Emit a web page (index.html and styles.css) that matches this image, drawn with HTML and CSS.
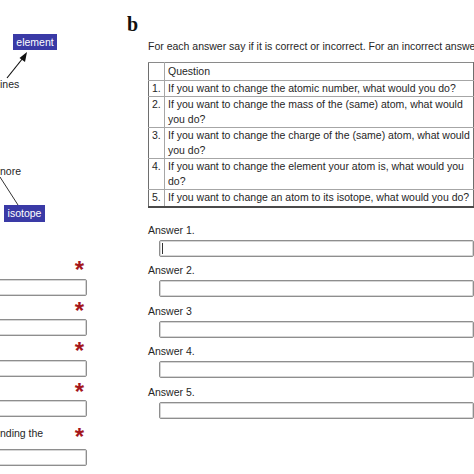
FILE: index.html
```html
<!DOCTYPE html>
<html>
<head>
<meta charset="utf-8">
<link rel="stylesheet" href="styles.css">
</head>
<body>
<div class="page">
  <div class="left">
    <div class="diagram">
      <div class="node node-element">element</div>
      <div class="word word-lines">ines</div>
      <div class="word word-more">nore</div>
      <div class="node node-isotope">isotope</div>
      <svg class="links" width="127" height="255" viewBox="0 0 127 255">
        <line x1="7" y1="78" x2="23" y2="58" stroke="#111" stroke-width="1.2"/>
        <polygon points="27,52 19.5,58 25,62" fill="#111"/>
        <line x1="0" y1="177" x2="18" y2="205" stroke="#333" stroke-width="1"/>
      </svg>
    </div>
    <div class="lfield">
      <div class="lrow"><span class="ltext"></span><span class="star">*</span></div>
      <input class="linput" type="text">
    </div>
    <div class="lfield">
      <div class="lrow"><span class="ltext"></span><span class="star">*</span></div>
      <input class="linput" type="text">
    </div>
    <div class="lfield">
      <div class="lrow"><span class="ltext"></span><span class="star">*</span></div>
      <input class="linput" type="text">
    </div>
    <div class="lfield">
      <div class="lrow"><span class="ltext"></span><span class="star">*</span></div>
      <input class="linput" type="text">
    </div>
    <div class="lfield">
      <div class="lrow lrow-last"><span class="ltext">nding the</span><span class="star">*</span></div>
      <input class="linput" type="text">
    </div>
  </div>
  <div class="right">
    <div class="panel-letter">b</div>
    <div class="content">
      <p class="intro">For each answer say if it is correct or incorrect. For an incorrect answer</p>
      <table class="qtable">
        <tr class="head"><td class="num"></td><td class="q">Question</td></tr>
        <tr><td class="num">1.</td><td class="q">If you want to change the atomic number, what would you do?</td></tr>
        <tr><td class="num">2.</td><td class="q">If you want to change the mass of the (same) atom, what would you do?</td></tr>
        <tr><td class="num">3.</td><td class="q">If you want to change the charge of the (same) atom, what would you do?</td></tr>
        <tr><td class="num">4.</td><td class="q">If you want to change the element your atom is, what would you do?</td></tr>
        <tr class="last"><td class="num">5.</td><td class="q">If you want to change an atom to its isotope, what would you do?</td></tr>
      </table>
      <div class="answers">
        <div class="answer">
          <div class="alabel">Answer 1.</div>
          <div class="abox"><input class="ainput" type="text"><span class="caret"></span></div>
        </div>
        <div class="answer">
          <div class="alabel">Answer 2.</div>
          <div class="abox"><input class="ainput" type="text"></div>
        </div>
        <div class="answer">
          <div class="alabel">Answer 3</div>
          <div class="abox"><input class="ainput" type="text"></div>
        </div>
        <div class="answer">
          <div class="alabel">Answer 4.</div>
          <div class="abox"><input class="ainput" type="text"></div>
        </div>
        <div class="answer">
          <div class="alabel">Answer 5.</div>
          <div class="abox"><input class="ainput" type="text"></div>
        </div>
      </div>
    </div>
  </div>
</div>
</body>
</html>
```

FILE: styles.css
```css
html, body {
  margin: 0;
  padding: 0;
  background: #ffffff;
  overflow: hidden;
}
body {
  width: 474px;
  height: 474px;
  font-family: "Liberation Sans", Arial, sans-serif;
  font-size: 10.5px;
  color: #262626;
}
.page {
  display: flex;
  width: 474px;
  height: 474px;
  overflow: hidden;
}
.left {
  width: 127px;
  flex: 0 0 127px;
  overflow: hidden;
}
.diagram {
  position: relative;
  height: 255px;
}
.links {
  position: absolute;
  left: 0;
  top: 0;
}
.node {
  position: absolute;
  background: #3a3aa6;
  color: #ffffff;
  line-height: 16px;
  text-align: center;
  z-index: 1;
}
.node-element {
  left: 13px;
  top: 34px;
  width: 44px;
  height: 16px;
}
.node-isotope {
  left: 4px;
  top: 205px;
  width: 41px;
  height: 17px;
  line-height: 17px;
}
.word {
  position: absolute;
  left: 0;
  line-height: 14px;
}
.word-lines { top: 77px; }
.word-more { top: 164px; }

.lfield {
  display: flex;
  flex-direction: column;
}
.lrow {
  display: flex;
  justify-content: space-between;
  align-items: flex-start;
  width: 86px;
  height: 23.5px;
}
.lrow-last {
  height: 32px;
}
.ltext {
  line-height: 14px;
  padding-top: 9px;
}
.star {
  font-family: "Liberation Sans", Arial, sans-serif;
  font-weight: bold;
  font-size: 24px;
  line-height: 24px;
  color: #a4161c;
  padding-top: 3px;
  margin-right: 2px;
}
.lrow-last .star { padding-top: 8px; }
.linput {
  display: block;
  box-sizing: border-box;
  margin: 0 0 0 -10px;
  width: 97px;
  height: 17px;
  border: 1px solid #8e8e8e;
  border-radius: 2px;
  box-shadow: inset 0 0 0 1px #d6d6d6;
  background: #ffffff;
  padding: 0;
  outline: none;
}

.right {
  flex: 1 1 auto;
  min-width: 0;
}
.panel-letter {
  font-family: "Liberation Serif", "Times New Roman", serif;
  font-weight: bold;
  font-size: 20px;
  line-height: 20px;
  color: #111111;
  margin-top: 14px;
  height: 20px;
}
.content {
  padding-left: 21px;
}
.intro {
  margin: 5px 0 0 0;
  line-height: 14px;
  white-space: nowrap;
}
.qtable {
  margin-top: 9px;
  border-collapse: collapse;
  width: 326px;
  line-height: 14.5px;
}
.qtable td {
  border: 1px solid #a6a6a6;
  padding: 0 3px 1px 3px;
  vertical-align: top;
}
.qtable .head td {
  padding-top: 1px;
  border-top: 1px solid #8a8a8a;
}
.qtable .last td {
  border-bottom: 2px solid #4a4a4a;
}
.qtable td.num {
  width: 9px;
  border-left: 1px solid #6e6e6e;
}
.qtable td.q {
  border-right: 1px solid #6e6e6e;
}
.answers {
  margin-top: 15px;
  display: flex;
  flex-direction: column;
  gap: 6.5px;
}
.answer {
  display: flex;
  flex-direction: column;
  gap: 3px;
}
.alabel {
  line-height: 14px;
}
.abox {
  position: relative;
  margin-left: 11px;
  width: 315px;
}
.ainput {
  display: block;
  box-sizing: border-box;
  margin: 0;
  width: 315px;
  height: 17px;
  border: 1px solid #8e8e8e;
  border-radius: 2px;
  box-shadow: inset 0 0 0 1px #d6d6d6;
  background: #ffffff;
  padding: 0;
  outline: none;
}
.caret {
  position: absolute;
  left: 3px;
  top: 3px;
  width: 1px;
  height: 11px;
  background: #333333;
}
```
